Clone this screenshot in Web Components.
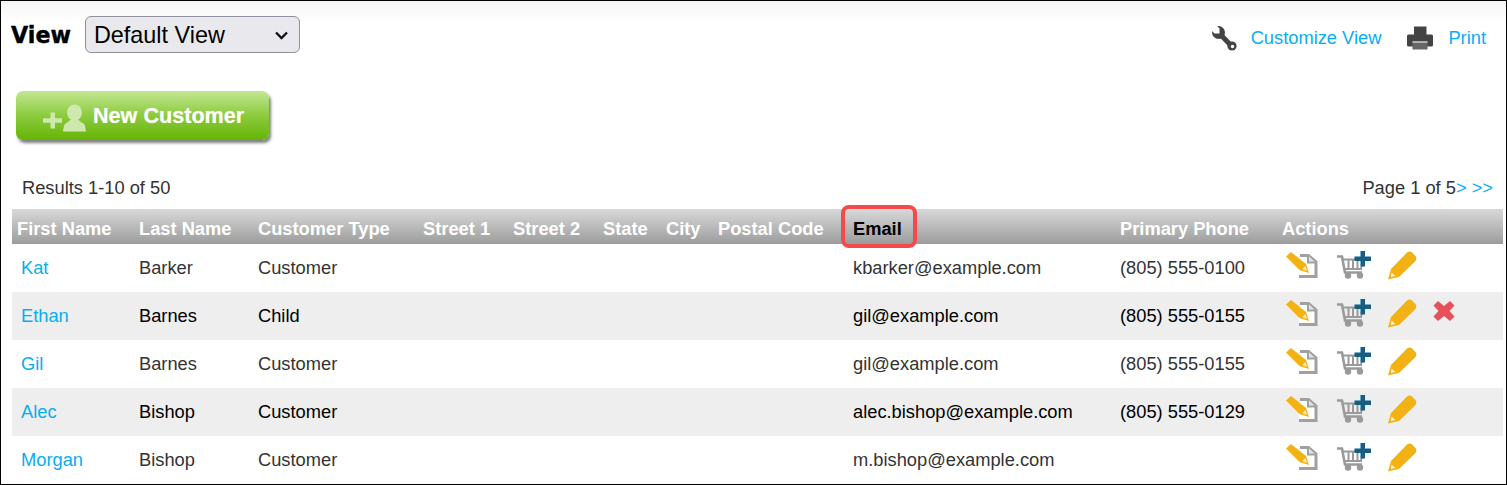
<!DOCTYPE html>
<html><head><meta charset="utf-8"><style>
html,body{margin:0;padding:0;background:#fff}
body{font-family:"Liberation Sans",Arial,sans-serif}
</style></head><body>
<crm-page></crm-page>
<template id="ic-note"><svg width="34" height="28" viewBox="0 0 34 28"><path d="M15 4.500h8.500l7.500 6.500v14.500H14" fill="#fff" stroke="#a0a0a0" stroke-width="3"/><path d="M23 4.500v7h7.500" fill="#e4e4e4" stroke="#a0a0a0" stroke-width="2"/><path d="M1 5.500L6 1l15 12 3 9-9.500-3z" fill="#f2b213"/><path d="M17.500 18l3-3 1.500 5z" fill="#fff0c4"/></svg></template>
<template id="ic-cart"><svg width="34" height="28" viewBox="0 0 34 28"><g fill="none" stroke="#9a9a9a"><path d="M0 5.500h5l3 16h17" stroke-width="2.600"/><path d="M6 8.500h20l-2 9.500H8M11.500 8.500v9.500M16 8.500v9.500M20.500 8.500v9.500" stroke-width="2"/></g><circle cx="11" cy="24.500" r="3.200" fill="#9a9a9a"/><circle cx="23" cy="24.500" r="3.200" fill="#9a9a9a"/><path d="M23.500 0h4.500v5.500h6v4.500h-6v5.500h-4.500V10h-6V5.500h6z" fill="#155f86"/></svg></template>
<template id="ic-pencil"><svg width="32" height="30" viewBox="0 0 32 30"><path d="M4 19L20 2.500q2.500-2 5 0l3.500 3.500q1.500 2.500 0 5L12 27 1 29.500z" fill="#f2b213"/><path d="M4.500 22.500l4 3.500-4.800 1.200z" fill="#fff0c4"/></svg></template>
<template id="ic-x"><svg width="24" height="24" viewBox="0 0 24 24"><path d="M1.500 6.500L6 2l6 5 6-5 4.500 4.500L17.500 12l5 5.500L18 22l-6-5-6 5-4.500-4.500L6.500 12z" fill="#e6525a"/></svg></template>
<script>
const $t=(s)=>document.getElementById(s).innerHTML;
class CrmLink extends HTMLElement{constructor(){super();this.attachShadow({mode:'open'}).innerHTML=`<style>:host{display:inline-flex;align-items:center;color:#07aef2;font-size:18.300px}</style><slot></slot>`}}
customElements.define('crm-link',CrmLink);
class CrmSelect extends HTMLElement{constructor(){super();this.attachShadow({mode:'open'}).innerHTML=`<style>
:host{display:inline-flex;position:relative;box-sizing:border-box;width:215px;height:37px}
select{appearance:none;-webkit-appearance:none;width:100%;height:100%;box-sizing:border-box;background:#e9e9ed;border:1px solid #8f8f9d;border-radius:6px;font:23.400px "Liberation Sans",Arial,sans-serif;color:#000;padding:2px 0 0 8px;margin:0}
svg{position:absolute;right:12px;top:15px;pointer-events:none}
</style><select><option>Default View</option></select><svg width="13" height="9" viewBox="0 0 13 9"><path d="M1 1.500l5.500 5.500 5.500-5.500" fill="none" stroke="#111" stroke-width="2.300"/></svg>`}}
customElements.define('crm-select',CrmSelect);
class CrmButton extends HTMLElement{constructor(){super();this.attachShadow({mode:'open'}).innerHTML=`<style>
:host{display:inline-flex;align-items:center;box-sizing:border-box;width:253px;height:49px;border-radius:7px;padding-left:27px;gap:6px;background:linear-gradient(#c3e792,#8ccb3e 50%,#66b406);box-shadow:2px 3px 3px rgba(60,60,60,.65);color:#fff;font-size:21.600px;font-weight:700;text-shadow:0 0 1px rgba(255,255,255,.5)}
svg{flex:none;filter:blur(.4px)}
</style><svg width="44" height="32" viewBox="0 0 44 32"><path d="M7.500 12.500h4.500v5.800h7v4.500h-7v5.700H7.500v-5.700H0v-4.500h7.500z" fill="#cfe8ad"/><ellipse cx="31.500" cy="12.500" rx="7.500" ry="8" fill="#cfe8ad"/><path d="M20 31.500l1-6q.5-2 4-3.500l3.500-3h6l3.500 3q3.500 1.500 4 3.500l1 6z" fill="#cfe8ad"/></svg><slot></slot>`}}
customElements.define('crm-button',CrmButton);
class CrmToolbar extends HTMLElement{constructor(){super();this.attachShadow({mode:'open'}).innerHTML=`<style>
:host{display:flex;align-items:center;height:36px;padding:15px 20px 0 10px}
b{font:700 22.200px "DejaVu Sans",sans-serif;color:#000;margin-right:14px;-webkit-text-stroke:.4px #000;padding-top:1px}
.r{margin-left:auto;display:flex;align-items:center;padding-top:8px}
svg{flex:none;filter:blur(.3px)}
.w{margin-right:13px}.p{margin:0 14px 0 26px}
</style><b>View</b><crm-select></crm-select><div class="r">
<svg class="w" width="27" height="27" viewBox="0 0 27 27"><path d="M8.500 8.500L20.500 21" stroke="#444" stroke-width="5" fill="none"/><circle cx="7.500" cy="7.500" r="6.500" fill="#444"/><path d="M-1 4L4-1 8.500 3.500V8.500H3.500Z" fill="#fff"/><circle cx="21" cy="21" r="4.600" fill="#444"/><circle cx="21.500" cy="21.500" r="1.700" fill="#fff"/></svg>
<crm-link>Customize View</crm-link>
<svg class="p" width="27" height="27" viewBox="0 0 27 27"><path d="M7 1.500h12.500v9H7z" fill="#444"/><path d="M1.500 9.500h23q1.500 0 1.500 1.500v9q0 1.500-1.500 1.500H1.500Q0 21.500 0 20V11q0-1.500 1.500-1.500z" fill="#444"/><path d="M5.500 17.500h15v7h-15z" fill="#666"/><path d="M5.500 17h15" stroke="#eee" stroke-width="1.200"/></svg>
<crm-link>Print</crm-link></div>`}}
customElements.define('crm-toolbar',CrmToolbar);
class CrmRow extends HTMLElement{constructor(){super();const a=n=>this.getAttribute(n)||'';const alt=this.hasAttribute('alt');const del=this.hasAttribute('del');
this.attachShadow({mode:'open'}).innerHTML=`<style>
:host{display:grid;grid-template-columns:var(--cols);height:var(--h,48px);align-items:center;background:${alt?'#eee':'#fff'};color:${alt?'#000':'#333'};font-size:18.300px;white-space:nowrap}
.f{padding-left:9px;color:#07aef2}.e{grid-column:4}.ph{grid-column:5}
.ac{display:flex;align-items:center;margin-top:-6px;margin-left:3px}
.ac svg{flex:none;filter:blur(.4px)}.ac svg:nth-child(2){margin-left:18px}.ac svg:nth-child(3){margin-left:16px}.ac svg:nth-child(4){margin-left:13px;margin-top:-4px}
</style><span class="f">${a('f')}</span><span>${a('l')}</span><span>${a('t')}</span><span class="e">${a('e')}</span><span class="ph">${a('p')}</span><span class="ac">${$t('ic-note')}${$t('ic-cart')}${$t('ic-pencil')}${del?$t('ic-x'):''}</span>`}}
customElements.define('crm-row',CrmRow);
class CrmHeader extends HTMLElement{constructor(){super();const cols=[['First Name',122],['Last Name',119],['Customer Type',165],['Street 1',90],['Street 2',90],['State',63],['City',52],['Postal Code',135],['Email',267],['Primary Phone',162],['Actions',221]];
this.attachShadow({mode:'open'}).innerHTML=`<style>
:host{display:flex;height:35px;box-sizing:border-box;padding:5px 0 0 5px;align-items:center;background:linear-gradient(#d9d9d9,#9c9c9c);color:#fff;font-size:18.300px;font-weight:700;white-space:nowrap}
.c{flex:none;position:relative}
.hl{color:#000}
.hl i{position:absolute;box-sizing:border-box;left:-12px;top:-13px;width:76px;height:43px;border:4px solid #f44a4a;border-radius:8px}
</style>`+cols.map(([t,w])=>`<span class="c ${t==='Email'?'hl':''}" style="width:${w}px">${t}${t==='Email'?'<i></i>':''}</span>`).join('')}}
customElements.define('crm-header',CrmHeader);
class CrmPage extends HTMLElement{constructor(){super();
const rows=[['Kat','Barker','Customer','kbarker@example.com','(805) 555-0100',0,0],['Ethan','Barnes','Child','gil@example.com','(805) 555-0155',1,1],['Gil','Barnes','Customer','gil@example.com','(805) 555-0155',0,0],['Alec','Bishop','Customer','alec.bishop@example.com','(805) 555-0129',1,0],['Morgan','Bishop','Customer','m.bishop@example.com','',0,0]];
this.attachShadow({mode:'open'}).innerHTML=`<style>
:host{display:block;box-sizing:border-box;width:1507px;height:485px;border:1px solid #000;overflow:hidden;background:linear-gradient(#f5f5f5,#fff 22px);--cols:127px 119px 595px 267px 162px 221px;color:#333}
crm-button{margin:39px 0 0 15px}
.res{display:flex;justify-content:space-between;font-size:18.300px;padding:38px 13px 0 21px;line-height:20px;height:21px;margin-bottom:10px}
.res a{color:#07aef2}
.t{margin:0 3px 0 11px}
</style><crm-toolbar></crm-toolbar><crm-button>New Customer</crm-button>
<div class="res"><span>Results 1-10 of 50</span><span>Page 1 of 5<a>&gt; &gt;&gt;</a></span></div>
<div class="t"><crm-header></crm-header>${rows.map(r=>`<crm-row f="${r[0]}" l="${r[1]}" t="${r[2]}" e="${r[3]}" p="${r[4]}" ${r[5]?'alt':''} ${r[6]?'del':''}></crm-row>`).join('')}</div>`}}
customElements.define('crm-page',CrmPage);
</script></body></html>
